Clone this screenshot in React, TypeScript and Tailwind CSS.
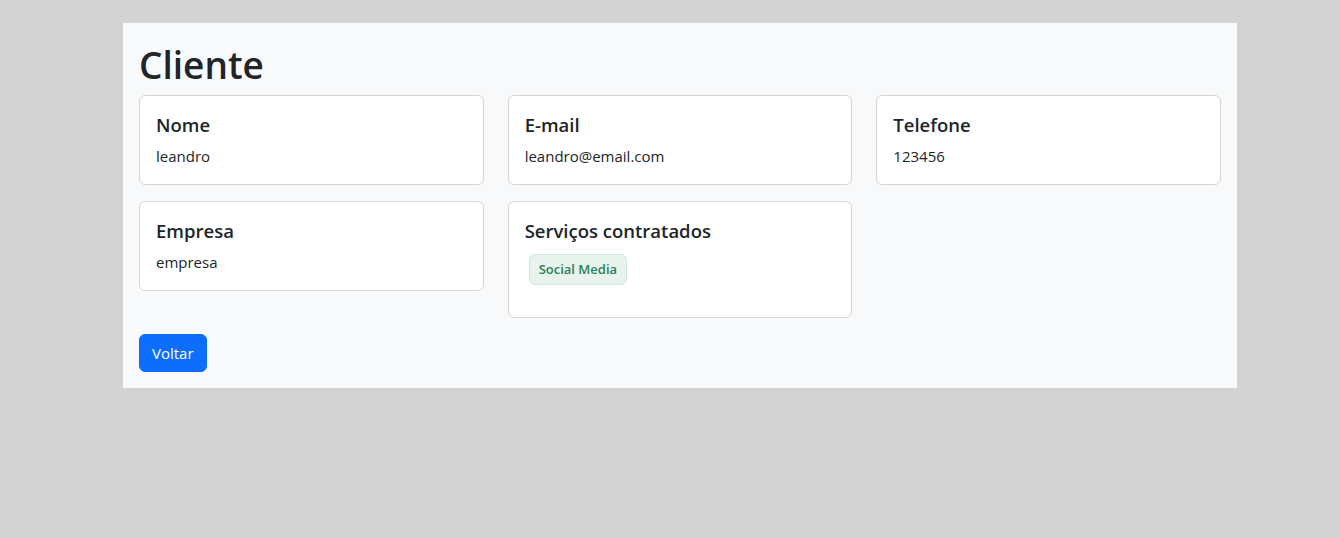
export default function App() {
  const fields = [
    { label: 'Nome', value: 'leandro' },
    { label: 'E-mail', value: 'leandro@email.com' },
    { label: 'Telefone', value: '123456' },
    { label: 'Empresa', value: 'empresa' },
  ];

  return (
    <div
      className="min-h-screen bg-[#d3d3d3] pt-[23px] text-[#212529]"
      style={{ fontFamily: '"Open Sans", "Noto Sans", sans-serif' }}
    >
      <div className="ml-[123px] w-[1114px] bg-[#f8f9fa] p-4">
        <h1 className="mb-[6px] pt-[2px] text-[37px] font-semibold leading-[48px]">Cliente</h1>

        <div className="grid grid-cols-3 items-start gap-x-6 gap-y-4">
          {fields.map((f) => (
            <div key={f.label} className="rounded-md border border-[#d5d5d5] bg-white p-4">
              <h5 className="mb-2 pt-px text-[18.5px] font-semibold leading-6">{f.label}</h5>
              <p className="-mt-px text-[15px] leading-6">{f.value}</p>
            </div>
          ))}

          <div className="rounded-md border border-[#d5d5d5] bg-white p-4">
            <h5 className="mb-2 pt-px text-[18.5px] font-semibold leading-6">Serviços contratados</h5>
            <div className="-mt-px pb-3">
              <span className="m-1 inline-block rounded-md border border-[#d1e7dd] bg-[#e8f3ee] px-[9px] py-[5px] text-[13px] font-semibold leading-[19px] text-[#2a7f56]">
                Social Media
              </span>
            </div>
          </div>
        </div>

        <button className="mt-4 rounded-md border border-[#0d6efd] bg-[#0d6efd] px-3 py-1.5 text-[15px] leading-6 text-white hover:bg-[#0b5ed7]">
          Voltar
        </button>
      </div>
    </div>
  );
}
